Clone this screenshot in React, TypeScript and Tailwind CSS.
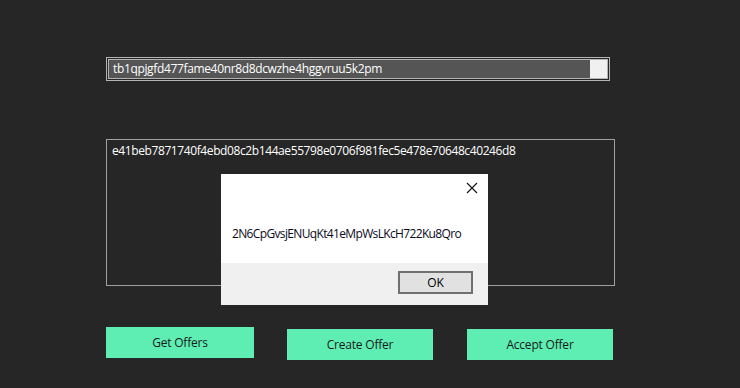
const font = { fontFamily: '"Open Sans", "Noto Sans", sans-serif' }

export default function App() {
  return (
    <div
      className="relative w-[740px] h-[388px] bg-[#262626] overflow-hidden text-[12px] leading-none"
      style={font}
    >
      <div className="flex flex-col pl-[106px] pt-[57px]">
        {/* address field */}
        <div className="w-[504px] h-[24px] border border-[#b4b4b4] p-px">
          <div className="h-full border border-[#b4b4b4] flex">
            <div className="flex-1 bg-[#555555] text-white flex items-center pl-[4px] tracking-[-0.35px]">
              tb1qpjgfd477fame40nr8d8dcwzhe4hggvruu5k2pm
            </div>
            <div className="w-[17px] bg-[#f0f0f0]" />
          </div>
        </div>

        {/* hash box */}
        <div className="mt-[58px] w-[509px] h-[147px] border border-[#a0a0a0] text-white pl-[5px] pt-[5px] tracking-[-0.4px]">
          e41beb7871740f4ebd08c2b144ae55798e0706f981fec5e478e70648c40246d8
        </div>

        {/* buttons */}
        <div className="mt-[41px] flex items-start text-[#1a1a1a] tracking-[-0.2px]">
          <button className="w-[148px] h-[31px] bg-[#5eeeb4] flex items-center justify-center">
            Get Offers
          </button>
          <button className="ml-[33px] mt-[2px] w-[146px] h-[31px] bg-[#5eeeb4] flex items-center justify-center">
            Create Offer
          </button>
          <button className="ml-[34px] mt-[2px] w-[146px] h-[31px] bg-[#5eeeb4] flex items-center justify-center">
            Accept Offer
          </button>
        </div>
      </div>

      {/* message box */}
      <div className="absolute left-[221px] top-[174px] w-[267px] h-[131px] bg-white flex flex-col">
        <div className="flex-1 relative flex items-center pl-[11px] text-[#0a0a1a] tracking-[-0.65px]">
          <svg
            className="absolute right-[10px] top-[8px]"
            width="12"
            height="12"
            viewBox="0 0 12 12"
          >
            <path d="M1 1 L11 11 M11 1 L1 11" stroke="#111" strokeWidth="1.1" />
          </svg>
          <span className="mt-[30px]">2N6CpGvsjENUqKt41eMpWsLKcH722Ku8Qro</span>
        </div>
        <div className="h-[42px] bg-[#f0f0f0] flex justify-end pr-[15px] pt-[8px]">
          <button className="w-[75px] h-[23px] border-2 border-[#707070] bg-[#e1e1e1] flex items-center justify-center text-black">
            <span className="border border-[#e1e1e1] px-1">OK</span>
          </button>
        </div>
      </div>
    </div>
  )
}
